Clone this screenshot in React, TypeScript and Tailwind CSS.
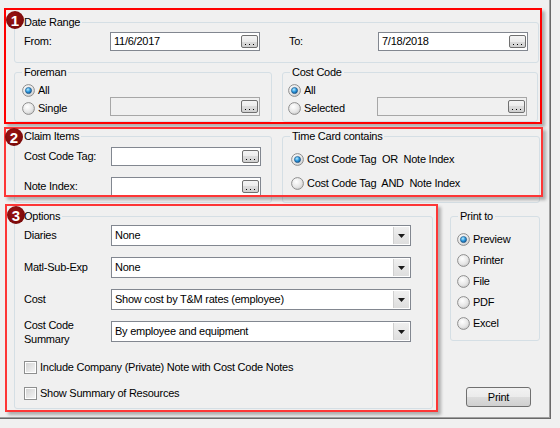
import { useId, type ReactNode } from "react";

function Group({ label, className, children }: { label: string; className?: string; children?: ReactNode }) {
  return (
    <div className={`relative shrink-0 rounded-[3px] border border-[#d5dfe5] ${className ?? ""}`}>
      <span className="absolute -top-[7px] left-[7px] bg-[#f0f0f0] px-[2px] leading-[13px] whitespace-nowrap">
        {label}
      </span>
      {children}
    </div>
  );
}

function Radio({ label, checked }: { label: string; checked?: boolean }) {
  const id = useId().replace(/:/g, "");
  return (
    <div className="flex items-center gap-[3px] whitespace-pre">
      <svg width="13" height="13" viewBox="0 0 13 13" className="shrink-0">
        <defs>
          <radialGradient id={`r${id}`} cx="0.4" cy="0.35" r="0.75">
            <stop offset="0" stopColor="#ffffff" />
            <stop offset="0.6" stopColor="#e6e6e6" />
            <stop offset="1" stopColor="#c4c4c4" />
          </radialGradient>
          <radialGradient id={`d${id}`} cx="0.4" cy="0.35" r="0.7">
            <stop offset="0" stopColor="#b9ecff" />
            <stop offset="0.5" stopColor="#2f9be0" />
            <stop offset="1" stopColor="#0a4f8f" />
          </radialGradient>
        </defs>
        <circle cx="6.5" cy="6.5" r="5.9" fill={`url(#r${id})`} stroke="#8f8f8f" strokeWidth="1" />
        {checked && <circle cx="6.5" cy="6.5" r="3.1" fill={`url(#d${id})`} stroke="#1d4f7a" strokeWidth="0.6" />}
      </svg>
      <span className="leading-[13px]">{label}</span>
    </div>
  );
}

function Check({ label }: { label: string }) {
  return (
    <div className="flex h-[13px] items-center gap-[3px] whitespace-nowrap">
      <div className="h-[13px] w-[13px] shrink-0 border border-[#8e8f8f] bg-white p-[1px]">
        <div className="h-full w-full bg-[linear-gradient(135deg,#d4d4d4,#f4f4f4)]" />
      </div>
      <span className="leading-[13px]">{label}</span>
    </div>
  );
}

function Ellipsis() {
  return (
    <div className="mr-[1px] flex h-[13px] w-[17px] shrink-0 items-end justify-center rounded-[2px] border border-[#707070] bg-[linear-gradient(#f4f4f4_0%,#ebebeb_50%,#dcdcdc_50%,#d0d0d0_100%)] pb-[1px]">
      <svg width="9" height="2" viewBox="0 0 9 2">
        <rect x="0" y="0" width="1" height="1" fill="#000" />
        <rect x="4" y="0" width="1" height="1" fill="#000" />
        <rect x="8" y="0" width="1" height="1" fill="#000" />
      </svg>
    </div>
  );
}

function TextBox({ value, disabled, className }: { value?: string; disabled?: boolean; className?: string }) {
  return (
    <div
      className={`flex h-[19px] w-[150px] shrink-0 items-center justify-between border pl-[3px] ${
        disabled ? "border-[#a7a7a7] bg-[#f0f0f0]" : "border-[#828790] bg-white"
      } ${className ?? ""}`}
    >
      <span className="leading-[13px]">{value}</span>
      <Ellipsis />
    </div>
  );
}

function Combo({ value }: { value: string }) {
  return (
    <div className="flex h-[21px] w-[300px] shrink-0 items-stretch border border-[#828790] bg-white p-[1px]">
      <span className="flex flex-1 items-center pl-[2px] leading-[13px]">{value}</span>
      <div className="flex w-[16px] items-center justify-center border-l border-[#cfcfcf] bg-[linear-gradient(#efefef,#dedede)]">
        <svg width="7" height="4" viewBox="0 0 7 4">
          <path d="M0 0h7L3.5 4z" fill="#1a1a1a" />
        </svg>
      </div>
    </div>
  );
}

function Badge({ n, className }: { n: number; className: string }) {
  return (
    <div
      className={`absolute flex h-[18px] w-[18px] items-center justify-center rounded-full bg-[radial-gradient(circle_at_40%_35%,#9b1414,#6e0606)] text-[15px] font-bold leading-none tracking-normal text-white ${className}`}
    >
      {n}
    </div>
  );
}

export default function App() {
  return (
    <div className="relative h-[428px] w-[560px] overflow-hidden bg-[#f0f0f0] text-[11px] tracking-[-0.25px] text-black [font-family:'Liberation_Sans',Arial,sans-serif]">
      <div className="h-[419px] w-[551px] border-r border-b border-[#696969]">
        <div className="h-full border-r border-b border-[#a0a0a0] pl-[14px] pt-[22px]">
          {/* Date Range */}
          <Group label="Date Range" className="h-[41px] w-[525px] pl-[9px] pt-[9px]">
            <div className="flex h-[19px] items-center">
              <span className="w-[86px]">From:</span>
              <TextBox value="11/6/2017" />
              <span className="ml-[29px] w-[89px]">To:</span>
              <TextBox value="7/18/2018" />
            </div>
          </Group>

          {/* Foreman / Cost Code */}
          <div className="mt-[9px] flex">
            <Group label="Foreman" className="h-[50px] w-[258px] pl-[7px] pt-[8px]">
              <div className="flex h-[18px] items-center">
                <Radio label="All" checked />
              </div>
              <div className="flex h-[18px] items-center">
                <div className="w-[88px]">
                  <Radio label="Single" />
                </div>
                <TextBox disabled className="mb-[3px]" />
              </div>
            </Group>
            <Group label="Cost Code" className="ml-[10px] h-[50px] w-[256px] pl-[5px] pt-[8px]">
              <div className="flex h-[18px] items-center">
                <Radio label="All" checked />
              </div>
              <div className="flex h-[18px] items-center">
                <div className="w-[89px]">
                  <Radio label="Selected" />
                </div>
                <TextBox disabled className="mb-[3px]" />
              </div>
            </Group>
          </div>

          {/* Claim Items / Time Card */}
          <div className="mt-[14px] flex">
            <Group label="Claim Items" className="h-[67px] w-[258px] pl-[9px] pt-[10px]">
              <div className="flex flex-col gap-[11px]">
                <div className="flex h-[19px] items-center">
                  <span className="w-[87px]">Cost Code Tag:</span>
                  <TextBox />
                </div>
                <div className="flex h-[19px] items-center">
                  <span className="w-[87px]">Note Index:</span>
                  <TextBox />
                </div>
              </div>
            </Group>
            <Group label="Time Card contains" className="ml-[10px] h-[67px] w-[258px] pl-[8px] pt-[13px]">
              <div className="flex flex-col gap-[6px]">
                <div className="flex h-[18px] items-center">
                  <Radio label="Cost Code Tag  OR  Note Index" checked />
                </div>
                <div className="flex h-[18px] items-center">
                  <Radio label="Cost Code Tag  AND  Note Index" />
                </div>
              </div>
            </Group>
          </div>

          {/* Options / Print to */}
          <div className="mt-[13px] flex">
            <Group label="Options" className="h-[193px] w-[419px] pl-[9px] pt-[8px]">
              <div className="flex flex-col gap-[11px]">
                <div className="flex h-[21px] items-center">
                  <span className="w-[87px]">Diaries</span>
                  <Combo value="None" />
                </div>
                <div className="flex h-[21px] items-center">
                  <span className="w-[87px]">Matl-Sub-Exp</span>
                  <Combo value="None" />
                </div>
                <div className="flex h-[21px] items-center">
                  <span className="w-[87px]">Cost</span>
                  <Combo value="Show cost by T&M rates (employee)" />
                </div>
                <div className="flex h-[21px] items-center">
                  <span className="w-[87px] leading-[14px]">
                    Cost Code
                    <br />
                    Summary
                  </span>
                  <Combo value="By employee and equipment" />
                </div>
              </div>
              <div className="mt-[19px] flex flex-col gap-[13px]">
                <Check label="Include Company (Private) Note with Cost Code Notes" />
                <Check label="Show Summary of Resources" />
              </div>
            </Group>

            <div className="ml-[17px] flex flex-col">
              <Group label="Print to" className="h-[125px] w-[90px] pl-[6px] pt-[12px]">
                {["Preview", "Printer", "File", "PDF", "Excel"].map((p, i) => (
                  <div key={p} className="flex h-[21px] items-center">
                    <Radio label={p} checked={i === 0} />
                  </div>
                ))}
              </Group>
              <button className="ml-[16px] mt-[46px] h-[20px] w-[65px] rounded-[3px] border border-[#707070] bg-[linear-gradient(#f2f2f2_0%,#ebebeb_50%,#dddddd_50%,#cfcfcf_100%)] leading-[13px]">
                Print
              </button>
            </div>
          </div>
        </div>
      </div>

      {/* annotation overlays */}
      <div className="pointer-events-none absolute left-[4px] top-[8px] h-[116px] w-[538px] border-2 border-[#ff0000] shadow-[3px_3px_3px_rgba(0,0,0,0.28)]" />
      <div className="pointer-events-none absolute left-[4px] top-[127px] h-[70px] w-[539px] border-2 border-[#fd3636] shadow-[3px_3px_3px_rgba(0,0,0,0.28)]" />
      <div className="pointer-events-none absolute left-[5px] top-[204px] h-[208px] w-[433px] border-2 border-[#fd3636] shadow-[3px_3px_3px_rgba(0,0,0,0.28)]" />
      <Badge n={1} className="left-[6px] top-[11px]" />
      <Badge n={2} className="left-[5px] top-[128px]" />
      <Badge n={3} className="left-[7px] top-[206px]" />
    </div>
  );
}
